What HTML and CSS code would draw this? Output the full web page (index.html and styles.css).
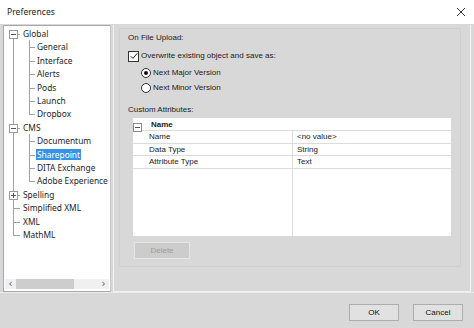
FILE: index.html
```html
<!DOCTYPE html>
<html lang="en">
<head>
    <meta charset="UTF-8">
    <title>Preferences</title>
    <link rel="stylesheet" href="styles.css">
</head>
<body>
    <div class="window">
        <div class="titlebar">
            <span class="title">Preferences</span>
            <svg class="close" width="10" height="10" viewBox="0 0 10 10">
                <path d="M1 1 L9 9 M9 1 L1 9" stroke="#333" stroke-width="1" fill="none"/>
            </svg>
        </div>

        <div class="main">
            <div class="tree">
                <ul class="root">
                    <li><span class="box"></span><span class="label">Global</span>
                        <ul>
                            <li><span class="label">General</span></li>
                            <li><span class="label">Interface</span></li>
                            <li><span class="label">Alerts</span></li>
                            <li><span class="label">Pods</span></li>
                            <li><span class="label">Launch</span></li>
                            <li><span class="label">Dropbox</span></li>
                        </ul>
                    </li>
                    <li><span class="box"></span><span class="label">CMS</span>
                        <ul>
                            <li><span class="label">Documentum</span></li>
                            <li><span class="label selected">Sharepoint</span></li>
                            <li><span class="label">DITA Exchange</span></li>
                            <li><span class="label">Adobe Experience</span></li>
                        </ul>
                    </li>
                    <li><span class="box plus"></span><span class="label">Spelling</span></li>
                    <li><span class="label">Simplified XML</span></li>
                    <li><span class="label">XML</span></li>
                    <li><span class="label">MathML</span></li>
                </ul>
                <div class="hscroll">
                    <span class="arrow">&lsaquo;</span>
                    <div class="track"><div class="thumb"></div></div>
                    <span class="arrow">&rsaquo;</span>
                </div>
            </div>

            <div class="content">
                <div class="group">
                    <div class="caption">On File Upload:</div>
                    <label class="check-row">
                        <span class="checkbox">
                            <svg width="8" height="8" viewBox="0 0 8 8">
                                <path d="M0.8 4.2 L3 6.4 L7.3 1.2" stroke="#222" stroke-width="1" fill="none"/>
                            </svg>
                        </span>
                        Overwrite existing object and save as:
                    </label>
                    <div class="radio-row"><span class="radio on"></span>Next Major Version</div>
                    <div class="radio-row"><span class="radio"></span>Next Minor Version</div>

                    <div class="caption attrs">Custom Attributes:</div>
                    <div class="grid">
                        <div class="grid-head"><span class="box grid-box"></span><b>Name</b></div>
                        <div class="grid-row"><span class="key">Name</span><span class="val">&lt;no value&gt;</span></div>
                        <div class="grid-row"><span class="key">Data Type</span><span class="val">String</span></div>
                        <div class="grid-row"><span class="key">Attribute Type</span><span class="val">Text</span></div>
                        <div class="grid-rest"><span class="key"></span><span class="val"></span></div>
                    </div>
                    <button class="btn disabled">Delete</button>
                </div>
            </div>
        </div>

        <div class="footer">
            <button class="btn">OK</button>
            <button class="btn">Cancel</button>
        </div>
    </div>
</body>
</html>
```

FILE: styles.css
```css
body {
    margin: 0;
    background-color: #d8d8d8;
    font-family: "Liberation Sans", Arial, sans-serif;
    font-size: 8px;
    color: #1a1a1a;
}
.window {
    width: 474px;
    height: 328px;
    display: flex;
    flex-direction: column;
    overflow: hidden;
}
.titlebar {
    height: 24px;
    background-color: #fff;
    display: flex;
    align-items: center;
    justify-content: space-between;
    padding: 0 7px;
    box-sizing: border-box;
    font-family: "Noto Sans", sans-serif;
    font-size: 8.6px;
    color: #222;
}
.close {
    margin-right: 1px;
}
.main {
    height: 268px;
    display: flex;
    padding: 1px 3px 0 3px;
    box-sizing: border-box;
}

/* tree */
.tree {
    width: 108px;
    background-color: #fff;
    border: 1px solid #a8a8a8;
    border-right-color: #c8c8c8;
    display: flex;
    flex-direction: column;
    box-sizing: border-box;
    font-family: "Noto Sans", sans-serif;
    font-size: 8.4px;
    color: #1e1e1e;
}
.tree ul {
    list-style: none;
    margin: 0;
    padding: 0;
}
.tree .root {
    flex: 1;
    margin: 1px 0 0 9px;
}
.tree li {
    position: relative;
    padding-left: 9px;
    line-height: 13.4px;
    white-space: nowrap;
}
.tree li::before {
    content: "";
    position: absolute;
    left: 0;
    top: 0;
    bottom: 0;
    border-left: 1px solid #a0a0a0;
}
.tree li:last-child::before {
    bottom: auto;
    height: 7px;
}
.tree .root > li:first-child::before {
    top: 7px;
}
.tree li::after {
    content: "";
    position: absolute;
    left: 0;
    top: 7px;
    width: 7px;
    border-top: 1px solid #a0a0a0;
}
.tree li ul {
    margin-left: 7px;
}
.tree li li {
    padding-left: 7px;
}
.tree li li::after {
    width: 6px;
}

/* expand / collapse boxes */
.box {
    position: absolute;
    left: -4px;
    top: 3px;
    width: 7px;
    height: 7px;
    border: 1px solid #9a9a9a;
    background-color: #fff;
    z-index: 1;
}
.box::before {
    content: "";
    position: absolute;
    left: 1px;
    top: 3px;
    width: 5px;
    height: 1px;
    background-color: #555;
}
.box.plus::after {
    content: "";
    position: absolute;
    left: 3px;
    top: 1px;
    width: 1px;
    height: 5px;
    background-color: #555;
}
.label {
    padding: 0 1px;
}
.label.selected {
    background-color: #3592e8;
    color: #fff;
}
.hscroll {
    height: 10px;
    margin: 0 1px 2px 1px;
    background-color: #f0f0f0;
    display: flex;
    align-items: center;
    font-family: "DejaVu Sans", sans-serif;
    font-size: 10px;
    color: #555;
}
.arrow {
    width: 11px;
    text-align: center;
    line-height: 10px;
}
.track {
    flex: 1;
    height: 10px;
}
.thumb {
    width: 58px;
    height: 10px;
    background-color: #cdcdcd;
}

/* right side */
.content {
    flex: 1;
    margin-left: 2px;
    border: 1px solid #f2f2f2;
    border-top: none;
    padding: 3px 9px 24px 5px;
    box-sizing: border-box;
    display: flex;
}
.group {
    flex: 1;
    border: 1px solid #cfcfcf;
    padding: 3px 0 0 8px;
}
.caption {
    line-height: 12px;
}
.check-row {
    display: flex;
    align-items: center;
    gap: 2px;
    margin-top: 6px;
    line-height: 12px;
}
.checkbox {
    width: 9px;
    height: 9px;
    border: 1px solid #333;
    background-color: #fff;
    display: flex;
    align-items: center;
    justify-content: center;
}
.radio-row {
    display: flex;
    align-items: center;
    gap: 2px;
    margin: 5px 0 0 13px;
    line-height: 11px;
}
.radio-row + .radio-row {
    margin-top: 4px;
}
.radio {
    width: 8px;
    height: 8px;
    border: 1px solid #333;
    border-radius: 50%;
    background-color: #fff;
    display: flex;
    align-items: center;
    justify-content: center;
}
.radio.on::after {
    content: "";
    width: 4px;
    height: 4px;
    border-radius: 50%;
    background-color: #111;
}
.caption.attrs {
    margin-top: 11px;
}
.grid {
    margin: 2px 9px 0 5px;
    height: 118px;
    background-color: #fff;
    display: flex;
    flex-direction: column;
}
.grid-head {
    height: 13px;
    display: flex;
    align-items: center;
    border-bottom: 1px solid #dcdcdc;
    box-sizing: border-box;
}
.grid-head b {
    margin-left: 5px;
}
.box.grid-box {
    position: static;
    margin-left: 4px;
    border-color: #8a8a8a;
    position: relative;
}
.grid-row {
    height: 12.5px;
    display: flex;
    border-bottom: 1px solid #dcdcdc;
    box-sizing: border-box;
    line-height: 11.5px;
}
.key {
    width: 160px;
    padding-left: 16px;
    border-right: 1px solid #dcdcdc;
    box-sizing: border-box;
}
.val {
    padding-left: 4px;
}
.grid-rest {
    flex: 1;
    display: flex;
}
.btn {
    width: 50px;
    height: 17px;
    padding: 0;
    background-color: #e1e1e1;
    border: 1px solid #adadad;
    font-family: "Liberation Sans", Arial, sans-serif;
    font-size: 8px;
    color: #111;
}
.btn.disabled {
    width: 56px;
    margin: 6px 0 0 6px;
    background-color: #cccccc;
    border-color: #e6e6e6;
    color: #9c9c9c;
}
.footer {
    flex: 1;
    display: flex;
    justify-content: flex-end;
    gap: 14px;
    padding: 11px 11px 0 0;
    border-top: 1px solid #ededed;
}
```
